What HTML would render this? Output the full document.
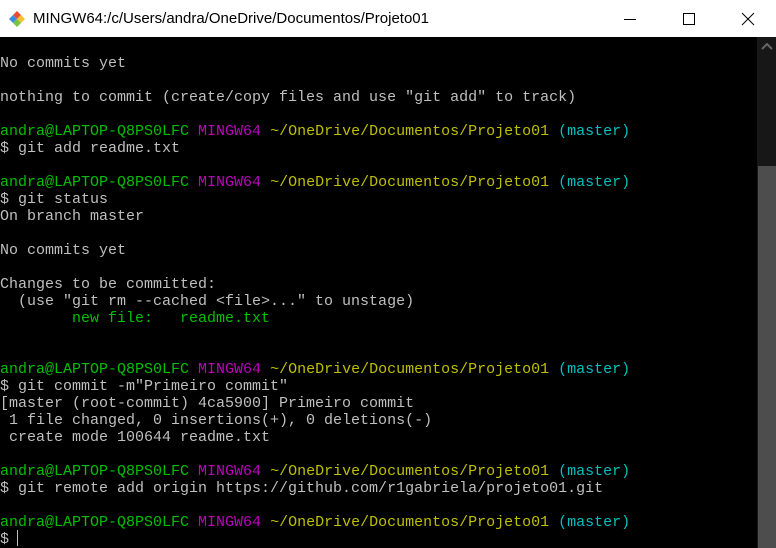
<!DOCTYPE html>
<html><head><style>
html,body{margin:0;padding:0;width:776px;height:548px;overflow:hidden;background:#000}
#title{position:absolute;left:0;top:0;width:776px;height:37px;background:#fff;font-family:"Liberation Sans",sans-serif;font-size:15px;color:#000}
#title .t{position:absolute;left:33px;top:10px}
#term{position:absolute;left:0;top:55px;font-family:"Liberation Mono",monospace;font-size:15px;line-height:17px;color:#bfbfbf;white-space:pre}
.g{color:#00bf00}.m{color:#bf00bf}.y{color:#bfbf00}.c{color:#00bfbf}
#sb{position:absolute;left:757px;top:37px;width:19px;height:511px;background:#171717}
#thumb{position:absolute;left:758px;top:166px;width:18px;height:382px;background:#4d4d4d}
</style></head><body>
<div id="title">
<svg style="position:absolute;left:8px;top:10px" width="18" height="18" viewBox="0 0 18 18">
<polygon points="9,1 13,5 9,9 5,5" fill="#e94e31"/>
<polygon points="13,5 17,9 13,13 9,9" fill="#f2c230"/>
<polygon points="9,9 13,13 9,17 5,13" fill="#7cc142"/>
<polygon points="5,5 9,9 5,13 1,9" fill="#3b8ede"/>
</svg>
<span class="t">MINGW64:/c/Users/andra/OneDrive/Documentos/Projeto01</span>
<svg style="position:absolute;left:620px;top:12px" width="140" height="14" viewBox="0 0 140 14">
<line x1="4" y1="7.5" x2="16" y2="7.5" stroke="#000" stroke-width="1"/>
<rect x="63.5" y="1.5" width="11" height="11" fill="none" stroke="#000" stroke-width="1"/>
<line x1="122" y1="1" x2="134" y2="13" stroke="#000" stroke-width="1"/>
<line x1="134" y1="1" x2="122" y2="13" stroke="#000" stroke-width="1"/>
</svg>
</div>
<div id="sb"></div>
<svg style="position:absolute;left:761px;top:43px" width="12" height="8"><polyline points="1,6 6,1 11,6" fill="none" stroke="#666" stroke-width="2"/></svg>
<div id="thumb"></div>
<div id="term">No commits yet

nothing to commit (create/copy files and use "git add" to track)

<span class="g">andra@LAPTOP-Q8PS0LFC</span> <span class="m">MINGW64</span> <span class="y">~/OneDrive/Documentos/Projeto01</span> <span class="c">(master)</span>
$ git add readme.txt

<span class="g">andra@LAPTOP-Q8PS0LFC</span> <span class="m">MINGW64</span> <span class="y">~/OneDrive/Documentos/Projeto01</span> <span class="c">(master)</span>
$ git status
On branch master

No commits yet

Changes to be committed:
  (use "git rm --cached &lt;file&gt;..." to unstage)
<span class="g">        new file:   readme.txt</span>


<span class="g">andra@LAPTOP-Q8PS0LFC</span> <span class="m">MINGW64</span> <span class="y">~/OneDrive/Documentos/Projeto01</span> <span class="c">(master)</span>
$ git commit -m"Primeiro commit"
[master (root-commit) 4ca5900] Primeiro commit
 1 file changed, 0 insertions(+), 0 deletions(-)
 create mode 100644 readme.txt

<span class="g">andra@LAPTOP-Q8PS0LFC</span> <span class="m">MINGW64</span> <span class="y">~/OneDrive/Documentos/Projeto01</span> <span class="c">(master)</span>
$ git remote add origin https://github.com/r1gabriela/projeto01.git

<span class="g">andra@LAPTOP-Q8PS0LFC</span> <span class="m">MINGW64</span> <span class="y">~/OneDrive/Documentos/Projeto01</span> <span class="c">(master)</span>
$ </div>
<div style="position:absolute;left:17px;top:530px;width:1px;height:16px;background:#bfbfbf"></div>
</body></html>
